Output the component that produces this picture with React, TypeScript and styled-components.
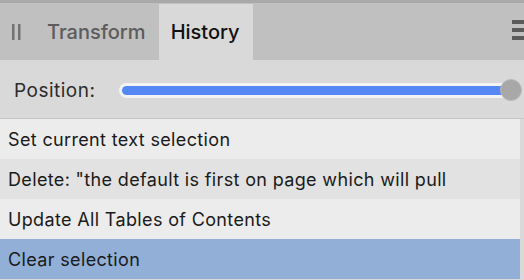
import React from 'react'
import styled, { createGlobalStyle } from 'styled-components'

const GlobalStyle = createGlobalStyle`
  html, body {
    margin: 0;
    padding: 0;
    background: #d9d9d9;
  }
  body {
    font-family: Inter, 'Liberation Sans', sans-serif;
    -webkit-font-smoothing: antialiased;
  }
`

const Panel = styled.div`
  width: 524px;
  height: 280px;
  overflow: hidden;
  background: #d9d9d9;
`

const TabBar = styled.div`
  display: flex;
  align-items: stretch;
  height: 57px;
  border-top: 3px solid #a9a9a9;
  background: #c0c0c0;
  overflow: hidden;
`

const Grip = styled.div`
  display: flex;
  align-items: center;
  padding-left: 12px;
  width: 23px;
`

const Tab = styled.div<{ $active?: boolean }>`
  display: flex;
  align-items: center;
  padding: 0 13px 0 12px;
  margin-top: 1px;
  font-size: 20px;
  font-weight: 500;
  color: ${({ $active }) => ($active ? '#111' : '#5c5c5c')};
  background: ${({ $active }) => ($active ? '#d9d9d9' : 'transparent')};
`

const Spacer = styled.div`
  flex: 1;
`

const MenuButton = styled.div`
  display: flex;
  align-items: center;
  margin-right: -4px;
  padding-bottom: 4px;
`

const PositionRow = styled.div`
  display: flex;
  align-items: center;
  height: 58px;
  padding-left: 14px;
  gap: 24px;
  border-bottom: 1px solid #c6c6c6;
`

const Label = styled.span`
  font-size: 19px;
  letter-spacing: 0.5px;
  margin-top: 3px;
  color: #2b2b2b;
`

const Track = styled.div`
  position: relative;
  flex: 1;
  height: 15px;
  margin-right: 3px;
  margin-top: 2px;
  border-radius: 8px;
  background: #f3f3f3;
  display: flex;
  align-items: center;
  padding: 0 3px;
`

const Fill = styled.div`
  height: 9px;
  border-radius: 5px;
  background: #5588f4;
`

const Thumb = styled.div`
  position: absolute;
  top: 50%;
  width: 20px;
  height: 20px;
  margin-top: -11px;
  margin-left: -11px;
  border-radius: 50%;
  background: #a8a8a8;
  border: 1px solid #b8b8b8;
`

const List = styled.div`
  display: flex;
  flex-direction: column;
  margin-right: 4px;
`

const Row = styled.div<{ $tone: 'light' | 'dark' | 'selected' }>`
  display: flex;
  align-items: center;
  height: 40px;
  padding-left: 8px;
  font-size: 18px;
  letter-spacing: 0.35px;
  color: #1a1a1a;
  white-space: nowrap;
  overflow: hidden;
  background: ${({ $tone }) =>
    $tone === 'selected' ? '#92afd7' : $tone === 'dark' ? '#e2e2e2' : '#ececec'};
`

const steps = [
  'Set current text selection',
  'Delete: "the default is first on page which will pull',
  'Update All Tables of Contents',
  'Clear selection',
]

const position = 0.975

export default function App() {
  return (
    <Panel>
      <GlobalStyle />
      <TabBar>
        <Grip>
          <svg width="9" height="16" viewBox="0 0 9 16">
            <rect x="0" y="0" width="2.5" height="16" fill="#727272" />
            <rect x="6" y="0" width="2.5" height="16" fill="#727272" />
          </svg>
        </Grip>
        <Tab>Transform</Tab>
        <Tab $active>History</Tab>
        <Spacer />
        <MenuButton>
          <svg width="16" height="20" viewBox="0 0 16 20">
            <rect x="0" y="0" width="16" height="4" fill="#5a5a5a" />
            <rect x="0" y="8" width="16" height="4" fill="#5a5a5a" />
            <rect x="0" y="16" width="16" height="4" fill="#5a5a5a" />
          </svg>
        </MenuButton>
      </TabBar>
      <PositionRow>
        <Label>Position:</Label>
        <Track>
          <Fill style={{ width: `${position * 100}%` }} />
          <Thumb style={{ left: `${position * 100}%` }} />
        </Track>
      </PositionRow>
      <List>
        {steps.map((s, i) => (
          <Row
            key={s}
            $tone={i === steps.length - 1 ? 'selected' : i % 2 === 1 ? 'dark' : 'light'}
          >
            {s}
          </Row>
        ))}
      </List>
    </Panel>
  )
}
